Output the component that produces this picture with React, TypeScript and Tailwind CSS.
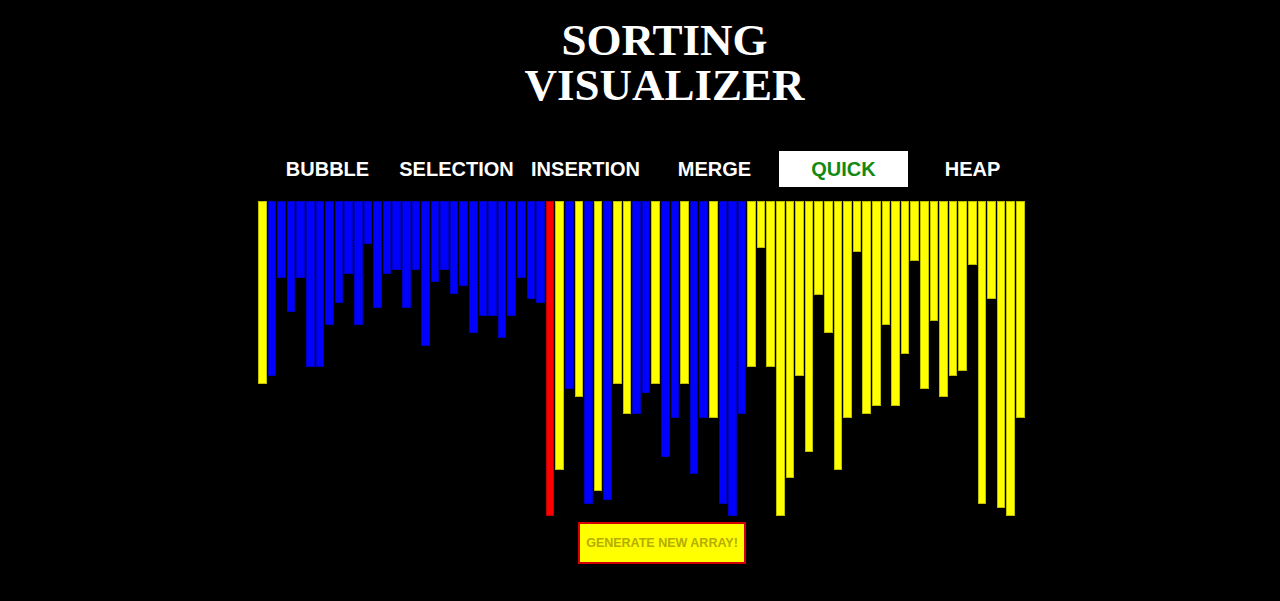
const algorithms = ["BUBBLE", "SELECTION", "INSERTION", "MERGE", "QUICK", "HEAP"];

// bar heights in px, top aligned
const heights = [
  183, 175, 77, 111, 77, 166, 166, 124, 102, 73,
  124, 43, 107, 73, 69, 107, 69, 145, 81, 69,
  93, 85, 132, 115, 115, 137, 115, 77, 98, 102,
  315, 269, 188, 196, 303, 290, 299, 183, 213, 213,
  192, 183, 256, 217, 183, 273, 217, 217, 303, 315,
  213, 166, 47, 166, 315, 277, 175, 251, 94, 132,
  269, 217, 51, 213, 205, 124, 205, 153, 60, 188,
  120, 196, 175, 170, 64, 303, 98, 307, 315, 217,
];

// Y = sorted / yellow, B = compared, R = pivot
const states =
  "Y" + "B".repeat(29) + "R" + "YBYBYBYYBBYBBYBBYBBB" + "Y".repeat(29);

const barColor: Record<string, string> = {
  Y: "bg-[#ffff00]",
  B: "bg-[#0000ff]",
  R: "bg-[#ff0000]",
};

export default function App() {
  return (
    <div className="min-h-screen h-[601px] bg-black overflow-hidden font-['Liberation_Sans',Arial,sans-serif]">
      <h1 className="pt-[18px] pl-[49px] text-center text-white font-bold text-[45px] leading-[45px] font-['Liberation_Serif','Times_New_Roman',serif]">
        SORTING
        <br />
        VISUALIZER
      </h1>

      <nav className="mt-[43px] ml-[263px] flex w-[774px]">
        {algorithms.map((name) => (
          <button
            key={name}
            className={
              name === "QUICK"
                ? "w-[129px] h-9 flex items-center justify-center bg-white text-[#128a12] font-bold text-[20px]"
                : "w-[129px] h-9 flex items-center justify-center text-white font-bold text-[20px]"
            }
          >
            {name}
          </button>
        ))}
      </nav>

      <div className="mt-[14px] ml-[258px] w-[766px] h-[315px] flex items-start gap-px">
        {heights.map((h, i) => (
          <div
            key={i}
            className={`flex-1 border border-black/25 ${barColor[states[i]]}`}
            style={{ height: h }}
          />
        ))}
      </div>

      <button className="mt-[6px] ml-[578px] w-[168px] h-[42px] bg-[#ffff00] border-2 border-[#d20000] text-[#b5ad00] font-bold text-[12.5px]">
        GENERATE NEW ARRAY!
      </button>
    </div>
  );
}
